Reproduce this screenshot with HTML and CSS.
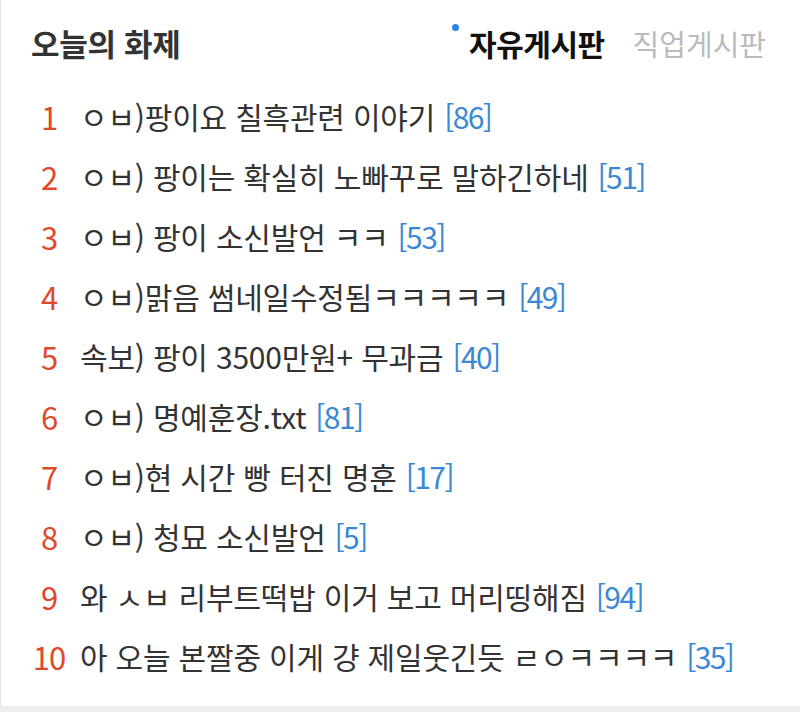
FILE: index.html
```html
<!DOCTYPE html>
<html lang="ko">
<head>
<meta charset="utf-8">
<link rel="stylesheet" href="styles.css">
</head>
<body>
<div class="panel">
  <div class="head">
    <h2 class="title">오늘의 화제</h2>
    <div class="tabs">
      <span class="tab active">자유게시판</span>
      <span class="tab">직업게시판</span>
    </div>
  </div>
  <ol class="list">
    <li><span class="num">1</span><span class="txt">ㅇㅂ)팡이요 칠흑관련 이야기</span><span class="cnt">[86]</span></li>
    <li><span class="num">2</span><span class="txt">ㅇㅂ) 팡이는 확실히 노빠꾸로 말하긴하네</span><span class="cnt">[51]</span></li>
    <li><span class="num">3</span><span class="txt">ㅇㅂ) 팡이 소신발언 ㅋㅋ</span><span class="cnt">[53]</span></li>
    <li><span class="num">4</span><span class="txt">ㅇㅂ)맑음 썸네일수정됨ㅋㅋㅋㅋㅋ</span><span class="cnt">[49]</span></li>
    <li><span class="num">5</span><span class="txt">속보) 팡이 3500만원+ 무과금</span><span class="cnt">[40]</span></li>
    <li><span class="num">6</span><span class="txt">ㅇㅂ) 명예훈장.txt</span><span class="cnt">[81]</span></li>
    <li><span class="num">7</span><span class="txt">ㅇㅂ)현 시간 빵 터진 명훈</span><span class="cnt">[17]</span></li>
    <li><span class="num">8</span><span class="txt">ㅇㅂ) 청묘 소신발언</span><span class="cnt">[5]</span></li>
    <li><span class="num">9</span><span class="txt">와 ㅅㅂ 리부트떡밥 이거 보고 머리띵해짐</span><span class="cnt">[94]</span></li>
    <li><span class="num">10</span><span class="txt">아 오늘 본짤중 이게 걍 제일웃긴듯 ㄹㅇㅋㅋㅋㅋ</span><span class="cnt">[35]</span></li>
  </ol>
</div>
<div class="bottom"></div>
</body>
</html>
```

FILE: styles.css
```css
html, body {
  margin: 0;
  padding: 0;
  background: #fff;
}
body {
  font-family: "Noto Sans CJK KR", "Noto Sans", sans-serif;
  color: #333;
  width: 800px;
  height: 712px;
  overflow: hidden;
}
.panel {
  border-left: 1px solid #e6e6e6;
  height: 706px;
  box-sizing: border-box;
}
.head {
  height: 86px;
  display: flex;
  align-items: center;
  justify-content: space-between;
  padding: 0 34px 0 30px;
}
.title {
  margin: 0;
  font-size: 31px;
  font-weight: 700;
  color: #333;
  line-height: 40px;
  letter-spacing: -0.3px;
}
.tabs {
  display: flex;
  gap: 28px;
}
.tab {
  font-size: 29px;
  line-height: 40px;
  color: #bbb;
  position: relative;
}
.tab.active {
  color: #111;
  font-weight: 700;
  font-size: 30px;
  letter-spacing: -0.5px;
}
.tab.active::before {
  content: "";
  position: absolute;
  left: -17px;
  top: 1px;
  width: 7px;
  height: 7px;
  border-radius: 50%;
  background: #2a86e0;
}
.list {
  list-style: none;
  margin: 0;
  padding: 0;
}
.list li {
  height: 60px;
  display: flex;
  align-items: center;
  font-size: 30px;
  white-space: nowrap;
}
.num {
  width: 36px;
  margin-left: 30px;
  margin-right: 13px;
  text-align: center;
  color: #e0482b;
  font-size: 31px;
  letter-spacing: -1px;
}
.txt {
  color: #333;
  letter-spacing: -0.2px;
}
.cnt {
  margin-left: 9px;
  color: #3b88d4;
  letter-spacing: -1.6px;
}
.bottom {
  height: 6px;
  background: #eee;
}
```
